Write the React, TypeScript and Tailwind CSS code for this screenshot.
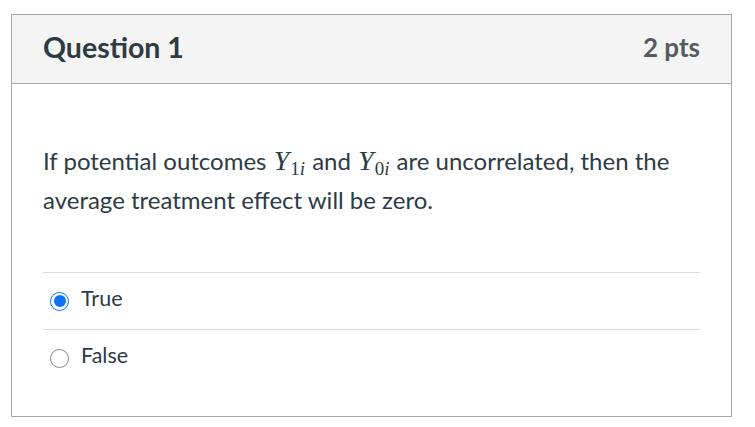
import React from 'react';

// Quiz question card — single true/false item

function MathY({ sub }: { sub: string }) {
  return (
    <span className="mx-[1px] whitespace-nowrap" style={{ fontFamily: '"Liberation Serif", "DejaVu Serif", serif' }}>
      <span className="italic text-[28px] leading-none">Y</span>
      <span className="text-[19px] leading-none relative top-[5px] ml-[1px]">
        {sub}
        <span className="italic">i</span>
      </span>
    </span>
  );
}

function Radio({ checked }: { checked: boolean }) {
  if (checked) {
    return (
      <span className="flex h-[19px] w-[19px] items-center justify-center rounded-full border-[1.5px] border-[#0b74ff] bg-white">
        <span className="h-[12px] w-[12px] rounded-full bg-[#0b74ff]" />
      </span>
    );
  }
  return <span className="h-[19px] w-[19px] rounded-full border border-[#8a8a8a] bg-white" />;
}

const answers = [
  { label: 'True', checked: true },
  { label: 'False', checked: false },
];

export default function App() {
  return (
    <div className="min-h-screen bg-white pt-[14px] pl-[11px]" style={{ fontFamily: 'Lato, "Open Sans", sans-serif' }}>
      <div className="w-[721px] border border-[#a8a8a8] bg-white">
        {/* Header */}
        <div className="flex h-[69px] items-center justify-between border-b border-[#a8a8a8] bg-[#f4f4f4] px-[31px] pb-[3px]">
          <h2 className="text-[28.5px] font-bold text-[#2d3b45]">Question 1</h2>
          <span className="text-[26px] font-bold text-[#555b60]">2 pts</span>
        </div>

        {/* Body */}
        <div className="px-[31px] pt-[58px] pb-[30px]">
          <p className="text-[24px] leading-[38px] text-[#2d3b45]">
            If potential outcomes <MathY sub="1" /> and <MathY sub="0" /> are uncorrelated, then the average
            treatment effect will be zero.
          </p>

          <div className="mt-[53px]">
            {answers.map(a => (
              <div key={a.label} className="flex h-[57px] items-center gap-[12px] border-t border-[#dcdcdc] pl-[7px]">
                <Radio checked={a.checked} />
                <span className="relative top-[-3px] text-[21.5px] text-[#2d3b45]">{a.label}</span>
              </div>
            ))}
          </div>
        </div>
      </div>
    </div>
  );
}
